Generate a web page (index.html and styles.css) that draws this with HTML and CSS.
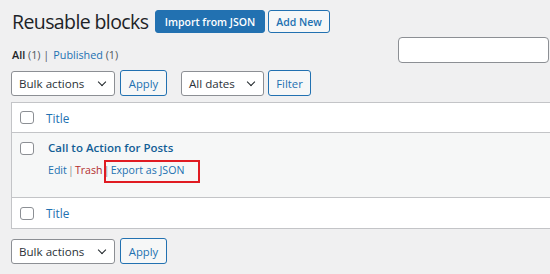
FILE: index.html
```html
<!DOCTYPE html>
<html lang="en">

<head>
    <meta charset="UTF-8">
    <meta name="viewport" content="width=device-width, initial-scale=1.0">
    <title>Reusable blocks</title>
    <link rel="stylesheet" href="styles.css">
</head>

<body>
    <div class="wrap">
        <div class="page-head">
            <h1>Reusable blocks</h1>
            <a href="#import" class="btn btn-primary">Import from JSON</a>
            <a href="#new" class="btn btn-outline">Add New</a>
        </div>

        <div class="views-row">
            <ul class="views">
                <li><a href="#all" class="current">All <span class="count">(1)</span></a> |</li>
                <li><a href="#published">Published <span class="count">(1)</span></a></li>
            </ul>
            <div class="search-box">
                <input type="search" class="search-input">
                <button type="button" class="btn btn-outline search-btn" aria-label="Search blocks"></button>
            </div>
        </div>

        <div class="tablenav">
            <div class="select select-bulk">Bulk actions <span class="chev"></span></div>
            <button type="button" class="btn btn-outline">Apply</button>
            <div class="select select-dates">All dates <span class="chev"></span></div>
            <button type="button" class="btn btn-outline">Filter</button>
        </div>

        <div class="list-table">
            <div class="row row-head">
                <span class="check"></span>
                <a href="#title" class="col-title">Title</a>
            </div>
            <div class="row row-item">
                <span class="check"></span>
                <div class="item-body">
                    <a href="#edit" class="item-title">Call to Action for Posts</a>
                    <div class="row-actions">
                        <a href="#edit">Edit</a> | <a href="#trash" class="trash">Trash</a> | <a href="#export" class="export">Export as JSON</a>
                    </div>
                </div>
            </div>
            <div class="row row-foot">
                <span class="check"></span>
                <a href="#title" class="col-title">Title</a>
            </div>
        </div>

        <div class="tablenav tablenav-bottom">
            <div class="select select-bulk">Bulk actions <span class="chev"></span></div>
            <button type="button" class="btn btn-outline">Apply</button>
        </div>
    </div>
</body>

</html>
```

FILE: styles.css
```css
body {
    margin: 0;
    background-color: #f0f0f1;
    font-family: "Open Sans", "Noto Sans", sans-serif;
    font-size: 11px;
    color: #1d2327;
    overflow: hidden;
}

a {
    color: #2271b1;
    text-decoration: none;
}

.wrap {
    width: 600px;
    padding: 10px 0 0 11px;
}

/* page title + actions */
.page-head {
    display: flex;
    align-items: center;
    height: 23px;
}

.page-head h1 {
    width: 135px;
    margin: 0 8px 0 1px;
    font-size: 19.5px;
    font-weight: 400;
    letter-spacing: -0.6px;
    line-height: 23px;
    white-space: nowrap;
    color: #1d2327;
}

.btn {
    display: inline-flex;
    align-items: center;
    justify-content: center;
    box-sizing: border-box;
    height: 23px;
    padding: 0;
    border: 1px solid #2271b1;
    border-radius: 3px;
    font-family: inherit;
    font-size: 11px;
    white-space: nowrap;
    cursor: pointer;
}

.btn-primary {
    width: 110px;
    background-color: #2271b1;
    color: #fff;
    font-weight: 600;
    font-size: 10.5px;
}

.btn-outline {
    background-color: #f6f7f7;
    color: #2271b1;
}

.page-head .btn-outline {
    width: 62px;
    margin-left: 3px;
    font-weight: 600;
    font-size: 10.5px;
}

/* views + search */
.views-row {
    display: flex;
    align-items: flex-end;
    justify-content: space-between;
    margin-top: 4px;
    height: 26px;
}

.views {
    list-style: none;
    display: flex;
    margin: 0;
    padding: 0 0 0 1px;
    font-size: 10.8px;
    line-height: 16px;
    color: #50575e;
}

.views li {
    margin-right: 4px;
}

.views a.current {
    color: #1d2327;
    font-weight: 600;
}

.views .count {
    color: #50575e;
    font-weight: 400;
}

.search-box {
    display: flex;
    gap: 2px;
}

.search-input {
    box-sizing: border-box;
    width: 151px;
    height: 26px;
    margin: 0;
    border: 1px solid #8c8f94;
    border-radius: 4px;
    background: #fff;
}

.search-btn {
    height: 26px;
    width: 60px;
}

/* bulk actions */
.tablenav {
    display: flex;
    align-items: center;
    margin-top: 7px;
    height: 26px;
}

.tablenav .btn {
    height: 26px;
    width: 47px;
    margin-left: 5px;
    font-size: 11.3px;
}

.select {
    display: flex;
    align-items: center;
    justify-content: space-between;
    box-sizing: border-box;
    height: 25px;
    padding: 0 8px 0 7px;
    border: 1px solid #8c8f94;
    border-radius: 3px;
    background: #fff;
    font-size: 11.6px;
    white-space: nowrap;
    color: #2c3338;
}

.select-bulk {
    width: 104px;
}

.select-dates {
    width: 83px;
    margin-left: 14px;
}

.tablenav .select-dates + .btn {
    width: 43px;
    margin-left: 4px;
}

.chev {
    width: 5px;
    height: 5px;
    margin: -3px 1px 0 0;
    border-right: 1.6px solid #1d2327;
    border-bottom: 1.6px solid #1d2327;
    transform: rotate(45deg);
}

/* table */
.list-table {
    margin-top: 6px;
    border: 1px solid #c3c4c7;
    background: #fff;
}

.row {
    display: flex;
    align-items: center;
    padding-left: 8px;
}

.row-head {
    height: 29px;
    border-bottom: 1px solid #c3c4c7;
}

.row-foot {
    height: 30px;
    border-top: 1px solid #c3c4c7;
}

.row-item {
    align-items: flex-start;
    height: 64px;
    background-color: #f6f7f7;
}

.check {
    box-sizing: border-box;
    width: 14px;
    height: 13px;
    border: 1px solid #8c8f94;
    border-radius: 3px;
    background: #fff;
}

.col-title {
    margin-left: 12px;
    font-size: 11.8px;
}

.row-item .check {
    margin-top: 9px;
}

.item-body {
    margin-left: 14px;
    padding-top: 6px;
}

.item-title {
    display: block;
    font-size: 11.5px;
    font-weight: 600;
    color: #135e96;
    line-height: 17px;
}

.row-actions {
    margin-top: 6px;
    font-size: 10.6px;
    word-spacing: -1.6px;
    color: #8c8f94;
    line-height: 16px;
}

.row-actions .trash {
    color: #b32d2e;
}

.row-actions .export {
    position: relative;
    word-spacing: 0;
}

/* highlight box drawn over the export link */
.row-actions .export::after {
    content: "";
    position: absolute;
    left: -7px;
    top: -3px;
    right: -16px;
    bottom: -6px;
    border: 2px solid #e01b22;
}

.tablenav-bottom {
    margin-top: 9px;
}
```
